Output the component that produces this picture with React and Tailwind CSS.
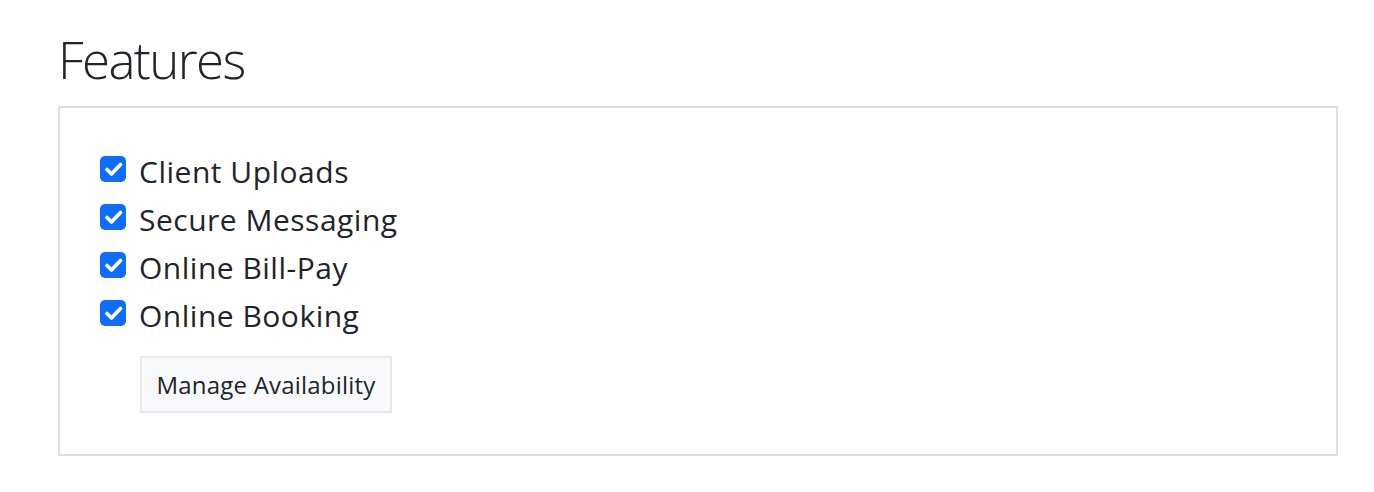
import React from "react";

const features = ["Client Uploads", "Secure Messaging", "Online Bill-Pay", "Online Booking"];

const Check = () => (
  <span className="flex h-[26px] w-[26px] shrink-0 items-center justify-center rounded-[5px] bg-[#0d6efd]">
    <svg width="26" height="26" viewBox="0 0 26 26" fill="none">
      <path
        d="M7 13.5l4.5 4.5l9-9.5"
        stroke="#fff"
        strokeWidth="3.6"
        strokeLinecap="round"
        strokeLinejoin="round"
      />
    </svg>
  </span>
);

const App = () => {
  return (
    <div
      className="min-h-screen bg-white pl-[58px] pt-[32px] text-[#212529]"
      style={{ fontFamily: '"Open Sans", "Noto Sans", sans-serif' }}
    >
      {/* Title */}
      <h1 className="mt-[2px] mb-[21px] text-[51px] font-light leading-none tracking-[-1.6px]">Features</h1>

      <div className="w-[1280px] h-[350px] border-2 border-[#dedede] pl-[40px] pt-[37px]">
        {features.map((f) => (
          <label key={f} className="flex h-[48px] items-center">
            <Check />
            <span className="ml-[13px] mt-[6px] text-[30px] leading-[48px] tracking-[0.5px]">{f}</span>
          </label>
        ))}

        <button className="ml-[40px] mt-[19px] h-[57px] w-[252px] border-2 border-[#e6e8eb] bg-[#f8f9fa] text-[24px] tracking-[0.2px] text-[#212529]">
          Manage Availability
        </button>
      </div>
    </div>
  );
};

export default App;
